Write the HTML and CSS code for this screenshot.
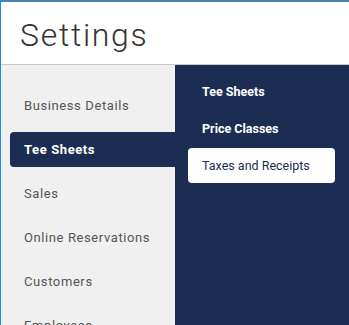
FILE: index.html
```html
<!DOCTYPE html>
<html lang="en">
<head>
	<meta charset="UTF-8">
	<title>Settings</title>
	<link rel="stylesheet" href="styles.css">
</head>
<body>
	<div class="app">
		<div class="header">
			<h1 class="title">Settings</h1>
		</div>
		<div class="main">
			<ul class="side_menu">
				<li class="side_item">Business Details</li>
				<li class="side_item side_active">Tee Sheets</li>
				<li class="side_item">Sales</li>
				<li class="side_item">Online Reservations</li>
				<li class="side_item">Customers</li>
				<li class="side_item">Employees</li>
			</ul>
			<ul class="sub_menu">
				<li class="sub_item">Tee Sheets</li>
				<li class="sub_item">Price Classes</li>
				<li class="sub_item sub_active">Taxes and Receipts</li>
			</ul>
		</div>
	</div>
</body>
</html>
```

FILE: styles.css
```css
*{
	margin:0;
	padding:0;
	box-sizing:border-box;
}

ul{
	list-style-type:none;
}

body{
	background-color:#fff;
	font-family:Roboto, "Liberation Sans", sans-serif;
	overflow:hidden;
}

.app{
	border-top:2px solid #4584b5;
	border-left:1px solid #1e88e5;
	height:325px;
	display:flex;
	flex-direction:column;
}

.header{
	height:63px;
	border-bottom:1px solid #cacaca;
	padding:14px 0 0 19px;
}

.title{
	font-size:32px;
	font-weight:300;
	letter-spacing:1.7px;
	color:#333;
}

.main{
	flex:1;
	display:flex;
	overflow:hidden;
}

.side_menu{
	width:174px;
	background-color:#f0f0f0;
	padding:23px 0 0 9px;
	display:flex;
	flex-direction:column;
	gap:9px;
	flex-shrink:0;
}

.side_item{
	height:35px;
	line-height:35px;
	padding-left:14px;
	font-size:13px;
	letter-spacing:0.6px;
	color:#555;
	border-radius:4px 0 0 4px;
	white-space:nowrap;
}

.side_active{
	background-color:#1b2d52;
	color:#fff;
	font-weight:bold;
}

.sub_menu{
	flex:1;
	background-color:#1b2d52;
	padding:9px 14px 0 13px;
	display:flex;
	flex-direction:column;
	gap:2px;
}

.sub_item{
	height:35px;
	line-height:35px;
	padding-left:14px;
	font-size:12.5px;
	font-weight:bold;
	color:#fff;
	border-radius:4px;
}

.sub_active{
	background-color:#fff;
	color:#1b2d52;
	font-weight:normal;
}
```
